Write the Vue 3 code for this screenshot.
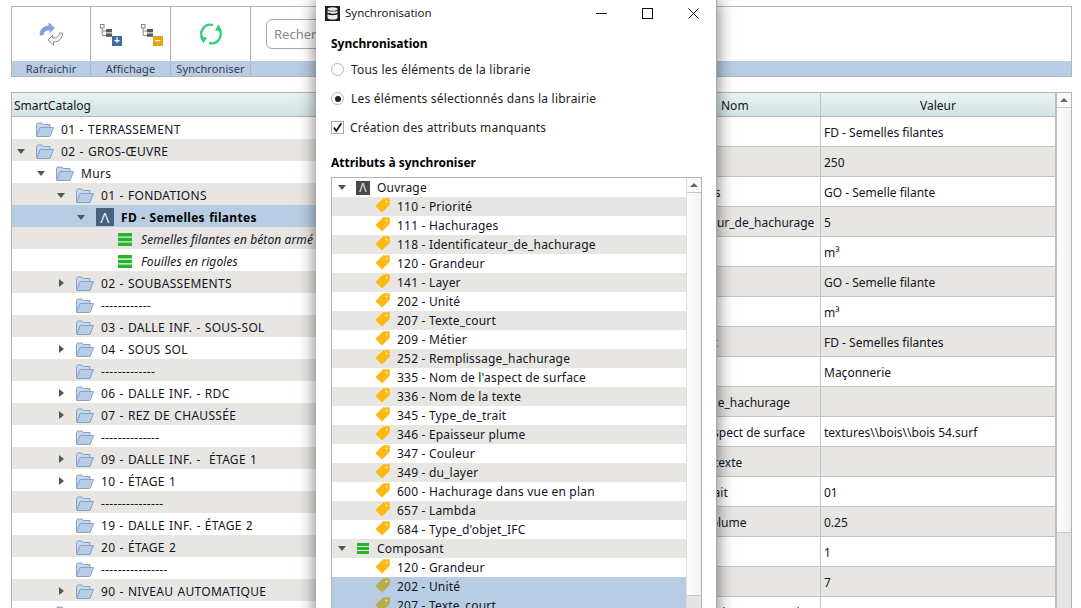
<template>
  <div class="page">
    <svg class="sprites" width="0" height="0">
      <symbol id="folder" viewBox="0 0 18 15">
        <path d="M.5 13.5V2.5L1.5 1H6l1.5 1.5H14V5" fill="#c5d6ea" stroke="#84a3c7" />
        <path d="M.7 14.5 4 5.5H17.5L14 14.5Z" fill="#b7cde6" stroke="#84a3c7" stroke-linejoin="round" />
      </symbol>
      <symbol id="tag" viewBox="0 0 15 15">
        <path d="M8.5 1H14V6.5L7 13.5 1.5 8Z" fill="currentColor" stroke="currentColor" stroke-width="1.6" stroke-linejoin="round" />
        <circle cx="11.5" cy="3.5" r="1" fill="#fff" opacity=".8" />
      </symbol>
      <symbol id="comp" viewBox="0 0 14 13">
        <path d="M0 0h14v3.6H0zM0 4.7h14v3.6H0zM0 9.4h14V13H0z" fill="#25b52d" />
      </symbol>
      <symbol id="hierarchy" viewBox="0 0 22 22">
        <rect x=".5" y=".5" width="3.5" height="3.5" fill="#fff" stroke="#888" />
        <path d="M2.2 4v7.5H6M2.2 7H6" fill="none" stroke="#888" />
        <rect x="6" y="5" width="6" height="3.4" fill="#5a5a5a" />
        <rect x="6" y="9.4" width="6" height="3.4" fill="#5a5a5a" />
      </symbol>
    </svg>

    <div class="toolbar">
      <section class="group g-refresh">
        <div class="group-body">
          <svg width="24" height="24" viewBox="0 0 24 24">
            <path d="M1 13C1 7 5 4 10 4V1L15.5 6 11 10.5V8C7 8 5 9 4 13Z" fill="#7ea6d8" stroke="#6a94c8" stroke-width=".6" />
            <path d="M1 13C1 7 5 4 10 4V1L15.5 6 11 10.5V8C7 8 5 9 4 13Z" transform="rotate(180 12.25 12)" fill="#f4f4f4" stroke="#8a8a8a" />
          </svg>
        </div>
        <div class="group-label">Rafraichir</div>
      </section>
      <section class="group g-view">
        <div class="group-body view-icons">
          <span class="tree-btn">
            <svg width="22" height="22"><use href="#hierarchy" /></svg>
            <span class="badge plus">+</span>
          </span>
          <span class="tree-btn">
            <svg width="22" height="22"><use href="#hierarchy" /></svg>
            <span class="badge minus">−</span>
          </span>
        </div>
        <div class="group-label">Affichage</div>
      </section>
      <section class="group g-sync">
        <div class="group-body">
          <svg width="24" height="24" viewBox="0 0 24 24" fill="none">
            <path d="M14 3.2A9 9 0 0 0 4 17" stroke="#2fd07a" stroke-width="2.3" />
            <path d="M.8 14.5 8 15.5 4.5 21.5Z" fill="#2fd07a" />
            <path d="M10 20.8A9 9 0 0 0 20 7" stroke="#2fd07a" stroke-width="2.3" />
            <path d="M23.2 9.5 16 8.5 19.5 2.5Z" fill="#2fd07a" />
          </svg>
        </div>
        <div class="group-label">Synchroniser</div>
      </section>
      <section class="group g-search">
        <div class="group-body search-body">
          <input class="search" type="text" placeholder="Rechercher" />
        </div>
        <div class="group-label"></div>
      </section>
    </div>

    <div class="panel">
      <div class="tree-col">
        <div class="head head-left">SmartCatalog</div>
        <div
          v-for="(row, i) in treeRows"
          :key="i"
          class="tree-row"
          :class="{ odd: i % 2 === 1, selected: row.kind === 'ouvrage' }"
          :style="{ paddingLeft: 5 + row.level * 20 + 'px' }"
        >
          <span class="arrow-slot"><i v-if="row.arrow" :class="row.arrow"></i></span>
          <span class="icon-slot">
            <svg v-if="row.kind === 'comp'" class="ic-comp" width="14" height="13"><use href="#comp" /></svg>
            <span v-else-if="row.kind === 'ouvrage'" class="lambda big">Λ</span>
            <svg v-else width="18" height="15"><use href="#folder" /></svg>
          </span>
          <span class="tree-text" :class="{ bold: row.kind === 'ouvrage', ital: row.kind === 'comp' }">{{ row.label }}</span>
        </div>
      </div>

      <div class="prop-col">
        <div class="prop-head">
          <div class="head head-nom">Nom</div>
          <div class="head head-val">Valeur</div>
        </div>
        <div v-for="(p, i) in props" :key="i" class="prop-row" :class="{ odd: i % 2 === 1 }">
          <div class="prop-name">{{ p[0] }}</div>
          <div class="prop-val">{{ p[1] }}</div>
        </div>
      </div>

      <div class="scroll main-scroll">
        <div class="scroll-up"><i class="up"></i></div>
        <div class="scroll-thumb"></div>
      </div>
    </div>

    <div class="dialog">
      <div class="titlebar">
        <span class="app-icon">
          <svg width="11" height="13" viewBox="0 0 11 13" fill="#eee">
            <ellipse cx="5.5" cy="2" rx="5" ry="1.8" />
            <path d="M.5 3.4C1.5 5 9.5 5 10.5 3.4V5.6C9.5 7.2 1.5 7.2.5 5.6ZM.5 7C1.5 8.6 9.5 8.6 10.5 7V11C9.5 13 1.5 13 .5 11Z" />
          </svg>
        </span>
        <span class="title">Synchronisation</span>
        <div class="win-btns">
          <svg width="11" height="11"><path d="M0 5.5H11" stroke="#111" /></svg>
          <svg width="11" height="11"><rect x=".5" y=".5" width="10" height="10" fill="none" stroke="#111" /></svg>
          <svg width="11" height="11"><path d="M.5.5 10.5 10.5M10.5.5.5 10.5" stroke="#111" /></svg>
        </div>
      </div>

      <div class="dialog-body">
        <h3 class="heading">Synchronisation</h3>
        <div class="option"><span class="radio"></span>Tous les éléments de la librarie</div>
        <div class="option"><span class="radio on"></span>Les éléments sélectionnés dans la librairie</div>
        <div class="option check-line">
          <span class="check">
            <svg width="11" height="11" viewBox="0 0 11 11"><path d="M1.8 5.5 4.3 9 9.3 1.2" fill="none" stroke="#111" stroke-width="1.7" /></svg>
          </span>Création des attributs manquants
        </div>
        <h3 class="heading attrs">Attributs à synchroniser</h3>

        <div class="list">
          <div class="list-rows">
            <div
              v-for="(a, i) in attrs"
              :key="i"
              class="list-row"
              :class="{ odd: i % 2 === 1, selected: a.sel, parent: a.group }"
            >
              <template v-if="a.group">
                <i class="down"></i>
                <span v-if="a.group === 'ouvrage'" class="lambda small">Λ</span>
                <svg v-else class="ic-list-comp" width="12" height="13"><use href="#comp" /></svg>
              </template>
              <svg v-else class="ic-tag" width="15" height="15"><use href="#tag" /></svg>
              <span>{{ a.label }}</span>
            </div>
          </div>
          <div class="scroll list-scroll">
            <div class="scroll-up"><i class="up"></i></div>
            <div class="scroll-thumb"></div>
          </div>
        </div>
      </div>
    </div>
  </div>
</template>

<script setup>
const treeRows = [
  { label: '01 - TERRASSEMENT', level: 0 },
  { label: '02 - GROS-ŒUVRE', level: 0, arrow: 'down' },
  { label: 'Murs', level: 1, arrow: 'down' },
  { label: '01 - FONDATIONS', level: 2, arrow: 'down' },
  { label: 'FD - Semelles filantes', level: 3, arrow: 'down', kind: 'ouvrage' },
  { label: 'Semelles filantes en béton armé', level: 4, kind: 'comp' },
  { label: 'Fouilles en rigoles', level: 4, kind: 'comp' },
  { label: '02 - SOUBASSEMENTS', level: 2, arrow: 'right' },
  { label: '------------', level: 2 },
  { label: '03 - DALLE INF. - SOUS-SOL', level: 2 },
  { label: '04 - SOUS SOL', level: 2, arrow: 'right' },
  { label: '-------------', level: 2 },
  { label: '06 - DALLE INF. - RDC', level: 2, arrow: 'right' },
  { label: '07 - REZ DE CHAUSSÉE', level: 2, arrow: 'right' },
  { label: '--------------', level: 2 },
  { label: '09 - DALLE INF. -  ÉTAGE 1', level: 2, arrow: 'right' },
  { label: '10 - ÉTAGE 1', level: 2, arrow: 'right' },
  { label: '---------------', level: 2 },
  { label: '19 - DALLE INF. - ÉTAGE 2', level: 2 },
  { label: '20 - ÉTAGE 2', level: 2 },
  { label: '----------------', level: 2 },
  { label: '90 - NIVEAU AUTOMATIQUE', level: 2, arrow: 'right' },
  { label: '', level: 1 }
]

const props = [
  ['', 'FD - Semelles filantes'],
  ['Priorité', '250'],
  ['Hachurages', 'GO - Semelle filante'],
  ['Identificateur_de_hachurage', '5'],
  ['Grandeur', 'm³'],
  ['Layer', 'GO - Semelle filante'],
  ['Unité', 'm³'],
  ['Texte_court', 'FD - Semelles filantes'],
  ['Métier', 'Maçonnerie'],
  ['Remplissage_hachurage', ''],
  ['Nom de l\'aspect de surface', 'textures\\\\bois\\\\bois 54.surf'],
  ['Nom de la texte', ''],
  ['Type_de_trait', '01'],
  ['Epaisseur plume', '0.25'],
  ['Couleur', '1'],
  ['du_layer', '7'],
  ['Hachurage dans vue en plan', '']
]

const attrs = [
  { label: 'Ouvrage', group: 'ouvrage' },
  ...[
    '110 - Priorité',
    '111 - Hachurages',
    '118 - Identificateur_de_hachurage',
    '120 - Grandeur',
    '141 - Layer',
    '202 - Unité',
    '207 - Texte_court',
    '209 - Métier',
    '252 - Remplissage_hachurage',
    "335 - Nom de l'aspect de surface",
    '336 - Nom de la texte',
    '345 - Type_de_trait',
    '346 - Epaisseur plume',
    '347 - Couleur',
    '349 - du_layer',
    '600 - Hachurage dans vue en plan',
    '657 - Lambda',
    "684 - Type_d'objet_IFC"
  ].map(label => ({ label })),
  { label: 'Composant', group: 'comp' },
  { label: '120 - Grandeur' },
  { label: '202 - Unité', sel: true },
  { label: '207 - Texte_court', sel: true }
]
</script>

<style>
html, body { margin: 0; background: #fff; overflow: hidden; }
</style>

<style scoped>
.page {
  position: relative;
  width: 1081px; height: 608px;
  box-sizing: border-box;
  padding: 6px 9px 0 11px;
  overflow: hidden;
  background: #fff;
  font: 12px/1 "Noto Sans", "Open Sans", sans-serif;
  color: #14141e;
}
.sprites { position: absolute; }
svg { display: block; }

/* toolbar */
.toolbar {
  display: flex;
  height: 71px;
  box-sizing: border-box;
  border: 1px solid #b4b4b4;
}
.group { display: flex; flex-direction: column; border-right: 1px solid #b4b4b4; }
.g-refresh { width: 78px; }
.g-view, .g-sync { width: 79px; }
.g-search { flex: 1; border-right: 0; }
.group-body {
  height: 54px;
  display: flex; align-items: center; justify-content: center;
}
.group-label {
  height: 15px;
  background: #b8cde3;
  color: #3a3f48;
  font-size: 11px; line-height: 16px;
  letter-spacing: .1px;
  text-align: center;
}
.view-icons { justify-content: flex-start; padding: 0 0 0 9px; gap: 19px; }
.tree-btn { position: relative; width: 22px; height: 22px; margin-top: 2px; }
.badge {
  position: absolute; right: 0; bottom: 0;
  width: 10px; height: 10px;
  color: #fff;
  font: bold 10px/10px "Liberation Sans", sans-serif;
  text-align: center;
}
.badge.plus { background: #3f6aa5; }
.badge.minus { background: #e8a60e; }
.search-body { justify-content: flex-start; padding-left: 15px; }
.search {
  width: 300px; height: 30px;
  box-sizing: border-box;
  border: 1px solid #a8a8a8;
  border-radius: 6px;
  padding: 0 7px;
  font: 13px "Noto Sans", sans-serif;
  outline: none;
}
.search::placeholder { color: #8a8a8a; }

/* main panel */
.panel {
  display: flex;
  height: 540px;
  margin-top: 15px;
  box-sizing: border-box;
  border: 1px solid #b4b4b4;
  border-bottom: 0;
  overflow: hidden;
}
.head {
  height: 24px;
  box-sizing: border-box;
  background: linear-gradient(#e7f3f2, #d3e3e3);
  border-bottom: 1px solid #b4b4b4;
  line-height: 26px;
  color: #14141e;
}
.head-left { padding-left: 2px; }
.tree-col { width: 638px; flex: none; }
.tree-row {
  height: 22px;
  box-sizing: border-box;
  padding-top: 2px;
  display: flex; align-items: center;
  background: #fff;
  letter-spacing: .3px;
  word-spacing: .8px;
}
.tree-row.odd { background: #e7e6e2; }
.tree-row.selected { background: #b8cde3; }
.arrow-slot { width: 19px; flex: none; display: flex; align-items: center; }
.icon-slot { width: 25px; flex: none; display: flex; align-items: center; }
.ic-comp { margin-left: 2px; }
.tree-text { white-space: pre; margin-top: 2px; }
.bold { font-weight: 700; color: #000; }
.ital { font-style: italic; letter-spacing: .1px; word-spacing: 0; }

.down {
  display: block; width: 0; height: 0;
  border-left: 4.5px solid transparent;
  border-right: 4.5px solid transparent;
  border-top: 5px solid #555;
}
.right {
  display: block; width: 0; height: 0;
  margin-left: 2px;
  border-top: 4.5px solid transparent;
  border-bottom: 4.5px solid transparent;
  border-left: 5px solid #555;
}
.up {
  display: block; width: 0; height: 0;
  border-left: 4.5px solid transparent;
  border-right: 4.5px solid transparent;
  border-bottom: 4px solid #666;
}
.lambda {
  display: flex; align-items: center; justify-content: center;
  color: #e8edf3;
  font-family: "Noto Sans", sans-serif;
}
.lambda.big { width: 18px; height: 18px; background: #48617f; font-size: 15px; }
.lambda.small { width: 14px; height: 14px; background: #4a4a4a; font-size: 12px; margin-left: 10px; margin-right: 7px; }

/* properties */
.prop-col { width: 407px; flex: none; border-right: 2px solid #bdbdbd; box-sizing: border-box; }
.prop-head, .prop-row { display: grid; grid-template-columns: 170px 1fr; }
.head-nom { padding-left: 71px; }
.head-val { border-left: 1px solid #c4c4c4; text-align: center; }
.prop-row {
  height: 30px;
  box-sizing: border-box;
  border-bottom: 1px solid #c4c4c4;
  line-height: 31px;
  background: #fff;
}
.prop-row.odd { background: #e7e6e2; }
.prop-name { padding-left: 3px; white-space: nowrap; overflow: hidden; }
.prop-val { border-left: 1px solid #c4c4c4; padding-left: 3px; }

.scroll { display: flex; flex-direction: column; background: #e4e4e4; }
.main-scroll { flex: 1; }
.scroll-up {
  height: 14px;
  display: flex; align-items: center; justify-content: center;
  background: #fafafa;
  border-bottom: 1px solid #c8c8c8;
}
.scroll-thumb {
  background: linear-gradient(90deg, #fdfdfd, #f2f2f2);
  border-bottom: 1px solid #c8c8c8;
}
.main-scroll .scroll-thumb { height: 424px; }
.list-scroll .scroll-thumb { height: 402px; }

/* dialog */
.dialog {
  position: absolute;
  left: 316px; top: 0;
  width: 401px; height: 640px;
  background: #fff;
  box-shadow: 0 0 16px rgba(0, 0, 0, .55);
  border-right: 1px solid #aaa;
  box-sizing: border-box;
}
.titlebar {
  height: 26px;
  display: flex; align-items: center;
  padding-left: 9px;
}
.app-icon {
  width: 15px; height: 15px;
  background: #1c1c1c;
  display: flex; align-items: center; justify-content: center;
  margin-right: 5px;
}
.title { font-size: 11.5px; color: #222; }
.win-btns {
  display: flex; gap: 35px;
  margin-left: auto;
  margin-right: 17px;
}
.dialog-body { padding: 0 15px; }
.heading {
  margin: 0;
  font-size: 12px; font-weight: 700;
  line-height: 16px;
  padding-top: 10px;
  color: #000;
}
.attrs { padding-top: 13px; }
.option {
  height: 29px;
  display: flex; align-items: center;
  color: #222;
  letter-spacing: .2px;
}
.option:first-of-type { margin-top: 3px; }
.radio {
  width: 13px; height: 13px;
  box-sizing: border-box;
  border: 1px solid #b5b5b5;
  border-radius: 50%;
  margin-right: 7px;
  flex: none;
  display: flex; align-items: center; justify-content: center;
}
.radio.on::after { content: ""; width: 6px; height: 6px; border-radius: 50%; background: #222; }
.check {
  width: 13px; height: 13px;
  box-sizing: border-box;
  border: 1px solid #aaa;
  margin-right: 6px;
  flex: none;
  display: flex; align-items: center; justify-content: center;
}
.list {
  display: flex;
  margin-top: 6px;
  width: 371px;
  box-sizing: border-box;
  border: 1px solid #b4b4b4;
  border-bottom: 0;
}
.list-rows { flex: 1; min-width: 0; }
.list-row {
  height: 19px;
  display: flex; align-items: center;
  background: #fff;
  white-space: nowrap;
  letter-spacing: .2px;
}
.list-row.odd { background: #e7e6e2; }
.list-row.selected { background: #b8cde3; }
.list-row.parent { padding-left: 6px; }
.list-scroll { width: 14px; flex: none; border-left: 1px solid #ddd; }
.ic-tag { color: #fdb913; margin: -2px 7px 0 43px; flex: none; }
.selected .ic-tag { color: #b5ae4d; }
.ic-list-comp { margin-left: 11px; margin-right: 8px; }
</style>
